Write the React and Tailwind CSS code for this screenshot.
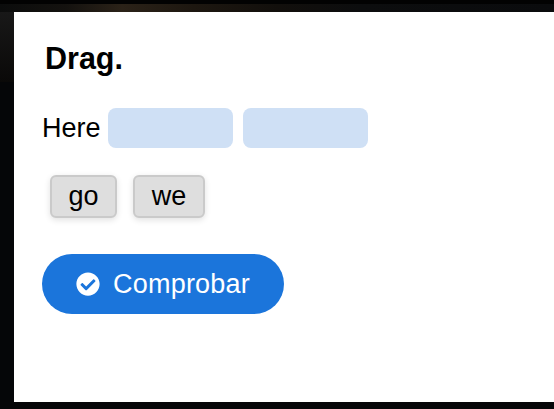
import { FaCheckCircle } from "react-icons/fa";

export default function App() {
  return (
    <div className="relative h-[409px] w-[554px] overflow-hidden bg-[#050608] pt-[12px] pb-[7px] pl-[14px] font-['Liberation_Sans',Arial,sans-serif] text-black">
      <div className="absolute inset-x-0 top-0 h-[12px] bg-[linear-gradient(90deg,#0b0c0c_0%,#14120f_12%,#2b2218_22%,#1d1710_35%,#120f0c_50%,#0c0d0e_65%,#0a0b0d_100%)]">
        <div className="h-[4px] bg-[#020202]" />
      </div>
      <div className="absolute left-0 top-[12px] h-[70px] w-[14px] bg-[linear-gradient(180deg,#181818,#0a0908)]" />
      <div className="relative h-[390px] w-[540px] bg-white pl-[28px] pt-[28px]">
        <h2 className="pl-[3px] text-[30.5px] font-bold leading-[36px]">Drag.</h2>
        <div className="mt-[32px] flex h-[40px] items-center text-[27px]">
          <span>Here</span>
          <span className="ml-[7px] h-[40px] w-[125px] rounded-[8px] bg-[#cfe0f5]" />
          <span className="ml-[10px] h-[40px] w-[125px] rounded-[8px] bg-[#cfe0f5]" />
        </div>
        <div className="mt-[27px] flex gap-[16px] pl-[8px]">
          <span className="flex h-[43px] w-[67px] items-center justify-center rounded-[6px] border-2 border-[#cacaca] bg-[#dedede] text-[27px] shadow-[0_2px_6px_rgba(0,0,0,0.12)]">go</span>
          <span className="flex h-[43px] w-[72px] items-center justify-center rounded-[6px] border-2 border-[#cacaca] bg-[#dedede] text-[27px] shadow-[0_2px_6px_rgba(0,0,0,0.12)]">we</span>
        </div>
        <button className="mt-[36px] flex h-[60px] w-[242px] items-center justify-center gap-[13px] rounded-[30px] bg-[#1b75db] text-[27px] tracking-[0.2px] text-white">
          <FaCheckCircle size={24} color="#fff" />
          <span>Comprobar</span>
        </button>
      </div>
    </div>
  );
}
